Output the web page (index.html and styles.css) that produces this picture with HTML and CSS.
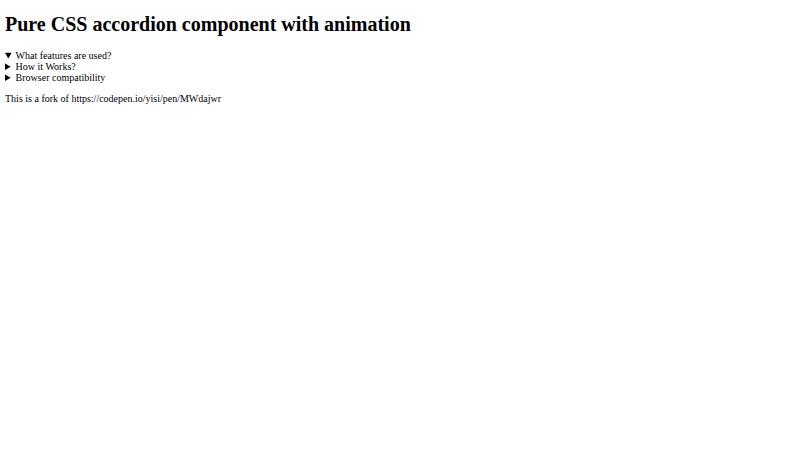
FILE: index.html
```html
<!DOCTYPE html>
<html lang="en">
<head>
  <meta charset="UTF-8">
  <title>Pure CSS accordion component with animation</title>
  <link rel="stylesheet" href="styles.css">
</head>
<body>
  <h1>Pure CSS accordion component with animation</h1>

  <details class="accordion" open>
    <summary>What features are used?</summary>
    <div class="accordion-body">
      <p>details / summary, CSS transitions, max-height.</p>
    </div>
  </details>
  <details class="accordion">
    <summary>How it Works?</summary>
    <div class="accordion-body">
      <p>The open attribute toggles the panel height.</p>
    </div>
  </details>
  <details class="accordion">
    <summary>Browser compatibility</summary>
    <div class="accordion-body">
      <p>All modern browsers.</p>
    </div>
  </details>

  <p>This is a fork of https://codepen.io/yisi/pen/MWdajwr</p>
</body>
</html>
```

FILE: styles.css
```css
body {
  margin: 0 5px 5px;
  font-family: "Liberation Serif", "Times New Roman", serif;
  font-size: 10px;
  color: #000;
  background-color: #fff;
}

h1 {
  font-size: 20px;
  margin: 13.4px 0;
}

p {
  margin: 10px 0;
}

.accordion summary {
  cursor: pointer;
}

.accordion-body {
  max-height: 0;
  overflow: hidden;
  visibility: hidden;
  transition: max-height 0.4s ease;
}

.accordion-body p {
  margin: 0;
}
```
